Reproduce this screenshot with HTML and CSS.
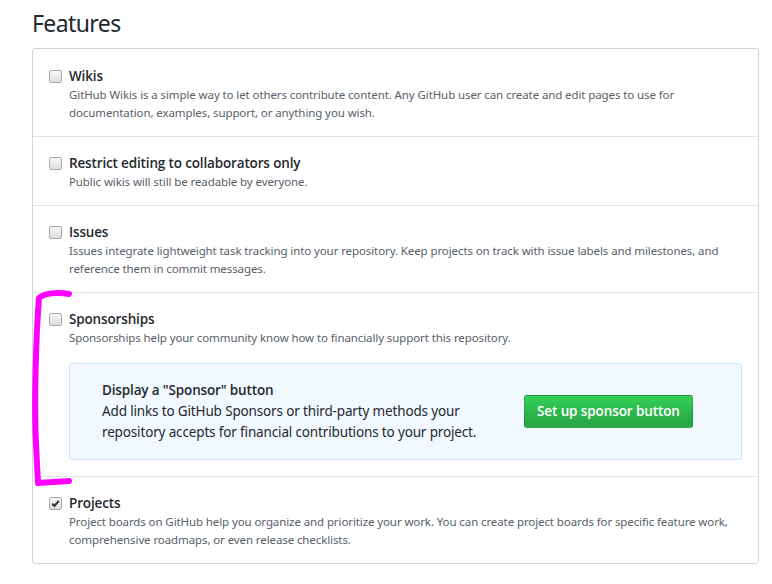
FILE: index.html
```html
<!DOCTYPE html>
<html lang="en">
<head>
<meta charset="utf-8">
<title>Features</title>
<link rel="stylesheet" href="styles.css">
</head>
<body>
<div class="page">
  <h2 class="subhead">Features</h2>
  <div class="box">
    <div class="box-row">
      <span class="cb"></span>
      <div class="row-body">
        <div class="row-title">Wikis</div>
        <p class="row-desc">GitHub Wikis is a simple way to let others contribute content. Any GitHub user can create and edit pages to use for documentation, examples, support, or anything you wish.</p>
      </div>
    </div>
    <div class="box-row">
      <span class="cb"></span>
      <div class="row-body">
        <div class="row-title">Restrict editing to collaborators only</div>
        <p class="row-desc">Public wikis will still be readable by everyone.</p>
      </div>
    </div>
    <div class="box-row">
      <span class="cb"></span>
      <div class="row-body">
        <div class="row-title">Issues</div>
        <p class="row-desc">Issues integrate lightweight task tracking into your repository. Keep projects on track with issue labels and milestones, and reference them in commit messages.</p>
      </div>
    </div>
    <div class="box-row box-row-sponsor">
      <span class="cb"></span>
      <div class="row-body">
        <div class="row-title">Sponsorships</div>
        <p class="row-desc">Sponsorships help your community know how to financially support this repository.</p>
        <div class="flash">
          <div class="flash-text">
            <div class="flash-title">Display a "Sponsor" button</div>
            <p class="flash-desc">Add links to GitHub Sponsors or third-party methods your repository accepts for financial contributions to your project.</p>
          </div>
          <button class="btn-primary" type="button">Set up sponsor button</button>
        </div>
      </div>
    </div>
    <div class="box-row">
      <span class="cb cb-checked"><svg viewBox="0 0 13 13" width="13" height="13"><path d="M3.2 6.6 L5.4 8.9 L9.8 3.8" fill="none" stroke="#333" stroke-width="2"/></svg></span>
      <div class="row-body">
        <div class="row-title">Projects</div>
        <p class="row-desc">Project boards on GitHub help you organize and prioritize your work. You can create project boards for specific feature work, comprehensive roadmaps, or even release checklists.</p>
      </div>
    </div>
  </div>
  <svg class="annotation" width="80" height="210" viewBox="0 0 80 210">
    <path d="M69 10 C58 8 44 9 39 14 C36 50 34 120 36 160 L38 199 L69 197" fill="none" stroke="#ff00ff" stroke-width="6" stroke-linecap="round" stroke-linejoin="round"/>
  </svg>
</div>
</body>
</html>
```
FILE: styles.css
```css
html, body {
  margin: 0;
  padding: 0;
  background: #fff;
}
body {
  font-family: "Noto Sans", "Open Sans", sans-serif;
  color: #24292e;
  font-size: 14px;
}
.page {
  position: relative;
  padding: 8px 0 0 32px;
  width: 727px;
}
.subhead {
  margin: 0 0 10px;
  font-size: 23px;
  letter-spacing: -0.6px;
  font-weight: 400;
  line-height: 30px;
  color: #24292e;
}
.box {
  border: 1px solid #d1d5da;
  border-radius: 3px;
}
.box-row {
  display: flex;
  align-items: flex-start;
  padding: 16px 16px 14px 16px;
  border-top: 1px solid #e1e4e8;
}
.box-row:first-child {
  border-top: 0;
  padding-top: 17px;
}
.box-row-sponsor {
  padding-bottom: 16px;
}
.cb {
  flex: 0 0 11px;
  width: 11px;
  height: 11px;
  margin: 4px 7px 0 0;
  border: 1px solid #a9a9a9;
  border-radius: 2px;
  background: linear-gradient(#f6f6f6, #dedede);
  position: relative;
}
.cb svg {
  position: absolute;
  left: -1px;
  top: -1px;
}
.row-body {
  flex: 1;
  min-width: 0;
}
.row-title,
.flash-title,
.btn-primary {
  font-family: "Open Sans", "Noto Sans", sans-serif;
  font-weight: 600;
}
.row-title {
  font-size: 13.5px;
  letter-spacing: -0.15px;
  line-height: 20px;
}
.row-desc {
  margin: 0;
  font-size: 11.5px;
  letter-spacing: -0.1px;
  line-height: 18px;
  color: #586069;
}
.flash {
  display: flex;
  align-items: center;
  margin-top: 16px;
  padding: 16px 32px;
  background: #f1f8ff;
  border: 1px solid #c8e1ff;
  border-radius: 3px;
}
.flash-text {
  flex: 0 0 392px;
}
.flash-title {
  font-size: 13.5px;
  letter-spacing: -0.15px;
  line-height: 21px;
}
.flash-desc {
  margin: 0;
  font-size: 13.5px;
  letter-spacing: -0.15px;
  line-height: 21px;
  color: #24292e;
}
.btn-primary {
  margin-left: 30px;
  padding: 6px 12px;
  font-size: 13.5px;
  letter-spacing: -0.1px;
  line-height: 19px;
  color: #fff;
  background: linear-gradient(-180deg, #34d058 0%, #28a745 90%);
  border: 1px solid rgba(27, 31, 35, 0.2);
  border-radius: 3px;
  white-space: nowrap;
}
.annotation {
  position: absolute;
  left: 0;
  top: 284px;
}
```
